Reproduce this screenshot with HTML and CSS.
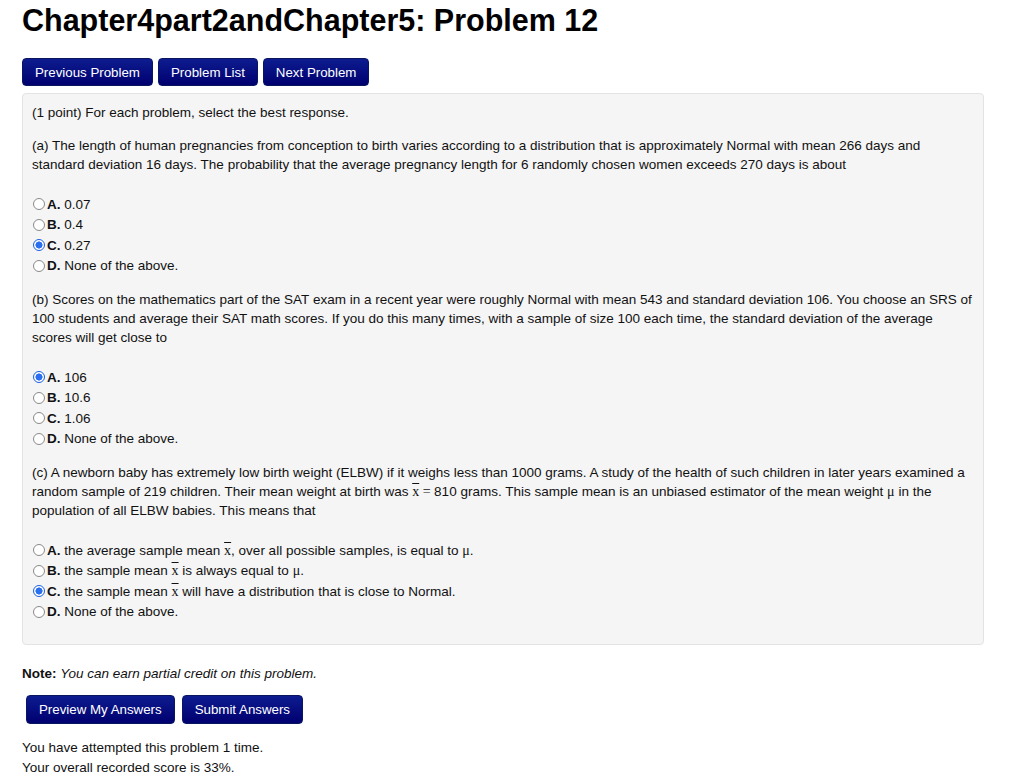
FILE: index.html
```html
<!DOCTYPE html>
<html>
<head>
<meta charset="utf-8">
<link rel="stylesheet" href="styles.css">
</head>
<body>
<h1 class="title">Chapter4part2andChapter5: Problem 12</h1>
<div class="nav">
  <a class="btn">Previous Problem</a>
  <a class="btn">Problem List</a>
  <a class="btn">Next Problem</a>
</div>
<div class="well">
  <p class="para">(1 point) For each problem, select the best response.</p>
  <div class="part">
    <p class="text">(a) The length of human pregnancies from conception to birth varies according to a distribution that is approximately Normal with mean 266 days and standard deviation 16 days. The probability that the average pregnancy length for 6 randomly chosen women exceeds 270 days is about</p>
    <div class="opts">
      <label class="opt"><input type="radio" name="a"><span><b>A.</b> 0.07</span></label>
      <label class="opt"><input type="radio" name="a"><span><b>B.</b> 0.4</span></label>
      <label class="opt"><input type="radio" name="a" checked><span><b>C.</b> 0.27</span></label>
      <label class="opt"><input type="radio" name="a"><span><b>D.</b> None of the above.</span></label>
    </div>
  </div>
  <div class="part">
    <p class="text">(b) Scores on the mathematics part of the SAT exam in a recent year were roughly Normal with mean 543 and standard deviation 106. You choose an SRS of 100 students and average their SAT math scores. If you do this many times, with a sample of size 100 each time, the standard deviation of the average scores will get close to</p>
    <div class="opts">
      <label class="opt"><input type="radio" name="b" checked><span><b>A.</b> 106</span></label>
      <label class="opt"><input type="radio" name="b"><span><b>B.</b> 10.6</span></label>
      <label class="opt"><input type="radio" name="b"><span><b>C.</b> 1.06</span></label>
      <label class="opt"><input type="radio" name="b"><span><b>D.</b> None of the above.</span></label>
    </div>
  </div>
  <div class="part">
    <p class="text">(c) A newborn baby has extremely low birth weight (ELBW) if it weighs less than 1000 grams. A study of the health of such children in later years examined a random sample of 219 children. Their mean weight at birth was <span class="m"><span class="xbar">x</span> = </span>810 grams. This sample mean is an unbiased estimator of the mean weight <span class="m">μ</span> in the population of all ELBW babies. This means that</p>
    <div class="opts">
      <label class="opt"><input type="radio" name="c"><span><b>A.</b> the average sample mean <span class="m xbar">x</span>, over all possible samples, is equal to <span class="m">μ</span>.</span></label>
      <label class="opt"><input type="radio" name="c"><span><b>B.</b> the sample mean <span class="m xbar">x</span> is always equal to <span class="m">μ</span>.</span></label>
      <label class="opt"><input type="radio" name="c" checked><span><b>C.</b> the sample mean <span class="m xbar">x</span> will have a distribution that is close to Normal.</span></label>
      <label class="opt"><input type="radio" name="c"><span><b>D.</b> None of the above.</span></label>
    </div>
  </div>
</div>
<p class="note"><b>Note:</b> <i>You can earn partial credit on this problem.</i></p>
<div class="actions">
  <a class="btn btn-lg">Preview My Answers</a>
  <a class="btn btn-lg">Submit Answers</a>
</div>
<div class="status">
  <div>You have attempted this problem 1 time.</div>
  <div>Your overall recorded score is 33%.</div>
</div>
</body>
</html>
```
FILE: styles.css
```css
html, body {
  margin: 0;
  padding: 0;
  background: #fff;
}
body {
  font-family: "Liberation Sans", Arial, Helvetica, sans-serif;
  font-size: 13.5px;
  color: #111;
  padding: 0 40px 0 22px;
}
.title {
  font-size: 30.5px;
  font-weight: bold;
  margin: 0;
  padding-top: 2px;
  line-height: 36px;
  color: #000;
}
.nav {
  display: flex;
  gap: 5px;
  margin-top: 20px;
}
.btn {
  display: inline-flex;
  align-items: center;
  height: 28px;
  box-sizing: border-box;
  padding: 0 12px;
  color: #fff;
  font-size: 13.3px;
  background: linear-gradient(#0d1c8f, #00006f);
  border: 1px solid #0a1560;
  border-radius: 4px;
  cursor: pointer;
}
.well {
  margin-top: 7px;
  background: #f5f5f5;
  border: 1px solid #e3e3e3;
  border-radius: 4px;
  padding: 9px 9px 22px 9px;
  line-height: 19.4px;
}
.para {
  margin: 0;
}
.part {
  margin-top: 13.6px;
}
.text {
  margin: 0;
}
.opts {
  margin-top: 19.2px;
  display: flex;
  flex-direction: column;
}
.opt {
  display: flex;
  align-items: center;
  height: 20.5px;
}
.opt input {
  appearance: none;
  -webkit-appearance: none;
  width: 12px;
  height: 12px;
  margin: 0 2px 0 1px;
  border: 1px solid #8a8a8a;
  border-radius: 50%;
  background: #fff;
  box-sizing: border-box;
  flex: none;
}
.opt input:checked {
  border: 1px solid #1a5fe0;
  background: radial-gradient(circle, #2a6ff0 0, #2a6ff0 3.3px, #fff 3.8px);
}
.opt b {
  font-weight: bold;
}
.m {
  font-family: "Liberation Serif", "Times New Roman", serif;
  font-size: 14px;
  line-height: 1;
}
.xbar {
  text-decoration: overline;
  text-decoration-thickness: 1px;
}
.note {
  margin: 19px 0 0 0;
  line-height: 19px;
}
.actions {
  display: flex;
  gap: 7px;
  margin: 12px 0 0 4px;
}
.btn-lg {
  height: 29px;
  padding: 0 12px;
  font-size: 13.3px;
}
.status {
  margin-top: 14px;
  line-height: 20px;
}
```
